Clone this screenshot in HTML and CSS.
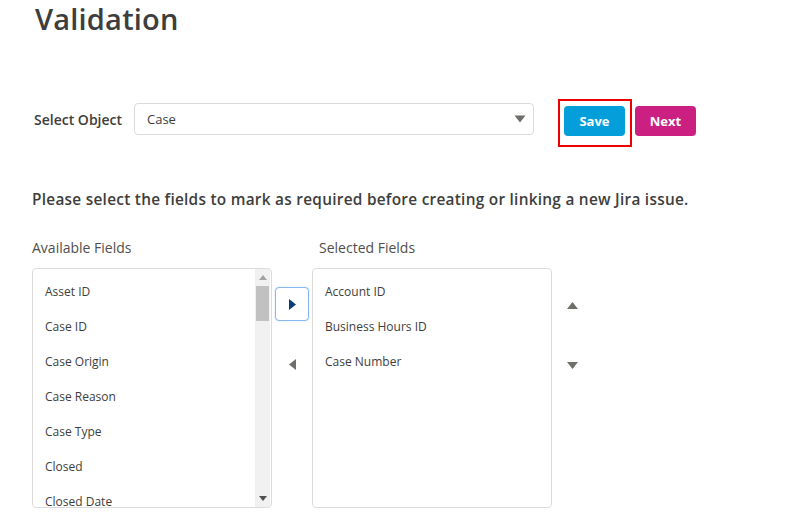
FILE: index.html
```html
<!DOCTYPE html>
<html>
<head>
<meta charset="utf-8">
<link rel="stylesheet" href="styles.css">
</head>
<body>
<div class="page">
  <h1 class="title">Validation</h1>
  <div class="object-row">
    <label class="obj-label">Select Object</label>
    <div class="select">
      <span class="select-value">Case</span>
      <svg class="select-caret" width="12" height="8" viewBox="0 0 12 8"><path d="M0.5 0.5 L11.5 0.5 L6 7.5 Z" fill="#706e6b"/></svg>
    </div>
    <div class="save-frame"><button class="btn btn-save">Save</button></div>
    <button class="btn btn-next">Next</button>
  </div>
  <p class="instructions">Please select the fields to mark as required before creating or linking a new Jira issue.</p>
  <div class="dual">
    <div class="col">
      <div class="col-label">Available Fields</div>
      <div class="listbox">
        <ul class="items">
          <li>Asset ID</li>
          <li>Case ID</li>
          <li>Case Origin</li>
          <li>Case Reason</li>
          <li>Case Type</li>
          <li>Closed</li>
          <li>Closed Date</li>
        </ul>
        <div class="scrollbar">
          <div class="sb-arrow"><svg width="8" height="5" viewBox="0 0 8 5"><path d="M0 5 L8 5 L4 0 Z" fill="#a3a3a3"/></svg></div>
          <div class="sb-thumb"></div>
          <div class="sb-space"></div>
          <div class="sb-arrow"><svg width="8" height="5" viewBox="0 0 8 5"><path d="M0 0 L8 0 L4 5 Z" fill="#505050"/></svg></div>
        </div>
      </div>
    </div>
    <div class="move-buttons">
      <button class="move move-right"><svg width="7" height="11" viewBox="0 0 7 11"><path d="M0 0 L7 5.5 L0 11 Z" fill="#0b3c7a"/></svg></button>
      <button class="move move-left"><svg width="7" height="11" viewBox="0 0 7 11"><path d="M7 0 L0 5.5 L7 11 Z" fill="#706e6b"/></svg></button>
    </div>
    <div class="col">
      <div class="col-label col-label-right">Selected Fields</div>
      <div class="listbox">
        <ul class="items">
          <li>Account ID</li>
          <li>Business Hours ID</li>
          <li>Case Number</li>
        </ul>
      </div>
    </div>
    <div class="order-buttons">
      <button class="move"><svg width="11" height="7" viewBox="0 0 11 7"><path d="M0 7 L11 7 L5.5 0 Z" fill="#706e6b"/></svg></button>
      <button class="move"><svg width="11" height="7" viewBox="0 0 11 7"><path d="M0 0 L11 0 L5.5 7 Z" fill="#706e6b"/></svg></button>
    </div>
  </div>
</div>
</body>
</html>
```
FILE: styles.css
```css
* { box-sizing: border-box; }
html, body { margin: 0; padding: 0; background: #ffffff; }
body {
  font-family: "Open Sans", "Noto Sans", sans-serif;
  color: #3e3e3c;
  width: 801px;
  height: 529px;
  overflow: hidden;
}
.page { padding: 0 0 0 32px; }
.title {
  margin: 0;
  padding: 0 0 0 3px;
  font-size: 29px;
  font-weight: 600;
  line-height: 38px;
  color: #3e3e3c;
  letter-spacing: 0.2px;
}
.object-row {
  display: flex;
  align-items: center;
  margin-top: 57px;
  height: 48px;
}
.obj-label {
  font-size: 14px;
  font-weight: 600;
  color: #3e3e3c;
  padding-left: 2px;
  width: 102px;
}
.select {
  width: 400px;
  height: 32px;
  border: 1px solid #dddbda;
  border-radius: 4px;
  display: flex;
  align-items: center;
  justify-content: space-between;
  padding: 0 7px 0 12px;
  font-size: 13px;
  color: #3e3e3c;
}
.save-frame {
  margin-left: 24px;
  margin-top: 8px;
  width: 74px;
  height: 48px;
  border: 2px solid #ee0000;
  display: flex;
  align-items: flex-start;
  padding: 5px 0 0 4px;
}
.btn {
  width: 61px;
  height: 30px;
  border: none;
  border-radius: 4px;
  color: #ffffff;
  font-family: "Open Sans", "Noto Sans", sans-serif;
  font-size: 13px;
  font-weight: 700;
  padding: 0;
}
.btn-save { background: #049fdb; }
.btn-next { background: #cc1f82; margin: 3px 0 0 3px; }
.instructions {
  margin: 47px 0 0 0;
  font-size: 15.4px;
  font-weight: 600;
  color: #3e3e3c;
  line-height: 20px;
  letter-spacing: 0.26px;
}
.dual {
  display: flex;
  margin-top: 29px;
}
.col { width: 240px; }
.col-label {
  font-size: 14px;
  color: #514f4d;
  line-height: 18px;
  height: 29px;
}
.col-label-right { padding-left: 7px; }
.listbox {
  display: flex;
  height: 240px;
  border: 1px solid #dddbda;
  border-radius: 4px;
  overflow: hidden;
}
.items {
  flex: 1;
  list-style: none;
  margin: 0;
  padding: 14px 0 0 12px;
  font-size: 12px;
  color: #3e3e3c;
}
.items li {
  height: 35px;
  line-height: 18px;
}
.scrollbar {
  width: 15px;
  margin-right: 1px;
  background: #f1f1f1;
  display: flex;
  flex-direction: column;
}
.sb-arrow {
  height: 17px;
  display: flex;
  align-items: center;
  justify-content: center;
}
.sb-thumb {
  height: 35px;
  margin: 0 1px;
  background: #c1c1c1;
}
.sb-space { flex: 1; }
.move-buttons {
  width: 40px;
  display: flex;
  flex-direction: column;
  align-items: center;
  padding-top: 48px;
}
.move {
  width: 34px;
  height: 34px;
  background: #ffffff;
  border: 1px solid transparent;
  border-radius: 4px;
  display: flex;
  align-items: center;
  justify-content: center;
  padding: 0;
}
.move-right { border-color: #8ab8ef; box-shadow: 0 0 2px #c4dcf8; }
.move-left { margin-top: 26px; }
.order-buttons {
  width: 42px;
  display: flex;
  flex-direction: column;
  align-items: center;
  padding-top: 49px;
  margin-left: -1px;
}
.order-buttons .move + .move { margin-top: 26px; }
```
